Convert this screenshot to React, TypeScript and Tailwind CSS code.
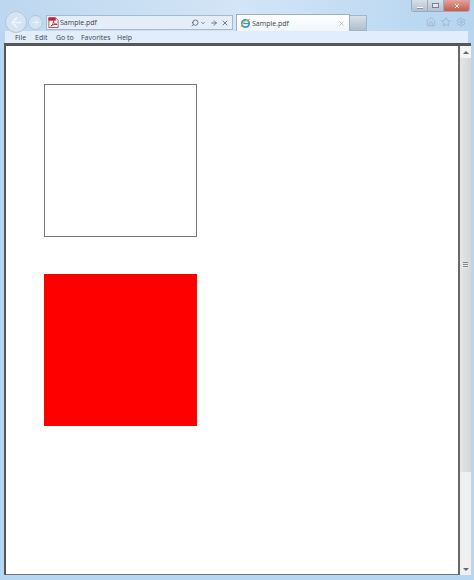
import { Home, Star, Settings, Search, ArrowRight, X, ArrowLeft, ChevronDown } from 'lucide-react';

const menus = [
  { label: 'File', width: 'w-[20px]' },
  { label: 'Edit', width: 'w-[21px]' },
  { label: 'Go to', width: 'w-[25px]' },
  { label: 'Favorites', width: 'w-[36px]' },
  { label: 'Help', width: 'w-[20px]' },
];

function PdfIcon() {
  return (
    <svg viewBox="0 0 12 12" className="w-[11px] h-[11px] shrink-0">
      <path d="M1 0.5h7l3 3v8H1z" fill="#fff" stroke="#8a2a2a" strokeWidth="0.8" />
      <path d="M0.5 1h8v3h-8z" fill="#c8202a" />
      <path d="M3 10c2-1 3-3 3-6 0 3 2 4 4 4-2 0-5 0-7 2z" fill="none" stroke="#c8202a" strokeWidth="1" />
    </svg>
  );
}

function IeIcon() {
  return (
    <svg viewBox="0 0 12 12" className="w-[11px] h-[11px] shrink-0">
      <circle cx="6" cy="6" r="4" fill="none" stroke="#2f9bd8" strokeWidth="2" />
      <path d="M2 6h8" stroke="#2f9bd8" strokeWidth="1.4" />
      <path d="M1 10c1-4 5-8 10-9" fill="none" stroke="#e8b93a" strokeWidth="1.2" />
    </svg>
  );
}

export default function App() {
  return (
    <div className="relative w-[474px] h-[580px] overflow-hidden flex flex-col bg-[#b9d6f0] font-['Open_Sans',sans-serif] text-[#3a4350]">
      {/* Title bar with nav, address and tabs */}
      <div className="h-[31px] shrink-0 flex items-start bg-gradient-to-r from-[#bcd7ef] via-[#d3e5f6] to-[#b4d4f0]">
        <div className="w-[46px] shrink-0" />
        <div className="mt-[15px] w-[187px] h-[15px] shrink-0 flex items-center pl-[1px] pr-[3px] border border-[#a8b9cb] bg-[#e4edf8]">
          <PdfIcon />
          <span className="ml-[1px] text-[7px] leading-none">Sample.pdf</span>
          <div className="ml-auto flex items-center gap-[1px] text-[#5a6573]">
            <Search className="w-[8px] h-[8px] -scale-x-100" strokeWidth={2.5} />
            <ChevronDown className="w-[6px] h-[6px]" strokeWidth={3} />
            <ArrowRight className="w-[8px] h-[8px] ml-[3px]" strokeWidth={2.5} />
            <X className="w-[8px] h-[8px] ml-[2px]" strokeWidth={2.5} />
          </div>
        </div>
        <div className="ml-[3px] mt-[14px] w-[114px] h-[17px] shrink-0 flex items-center pl-[3px] pr-[4px] border border-b-0 border-[#9cb0c4] bg-gradient-to-b from-white to-[#f1f6fb]">
          <IeIcon />
          <span className="ml-[1px] text-[7px] leading-none">Sample.pdf</span>
          <X className="ml-auto w-[7px] h-[7px] text-[#9aa4af]" strokeWidth={2} />
        </div>
        <div className="mt-[15px] w-[17px] h-[16px] shrink-0 border border-l-0 border-[#a3b5c7] bg-gradient-to-b from-[#d8e1ea] to-[#afbecd]" />
        <div className="ml-auto mt-[17px] mr-[8px] flex items-center gap-[5px] text-[#a2b1c0]">
          <Home className="w-[10px] h-[10px]" strokeWidth={2} />
          <Star className="w-[10px] h-[10px]" strokeWidth={2} />
          <Settings className="w-[10px] h-[10px]" strokeWidth={2} />
        </div>
      </div>

      {/* Back and forward buttons sit over the menu bar edge */}
      <div className="absolute top-[11px] left-[5px] flex items-center">
        <div className="w-[22px] h-[22px] rounded-full border border-[#b4c6d9] bg-[#d5e4f3] flex items-center justify-center">
          <ArrowLeft className="w-[15px] h-[15px] text-[#f1f6fb]" strokeWidth={2.5} />
        </div>
        <div className="w-[15px] h-[15px] ml-[1px] rounded-full border border-[#b4c6d9] bg-[#d3e3f2] flex items-center justify-center">
          <ArrowRight className="w-[9px] h-[9px] text-[#f1f6fb]" strokeWidth={2.5} />
        </div>
      </div>

      {/* Window controls */}
      <div className="absolute top-0 left-[411px] w-[59px] h-[12px] flex rounded-b-[3px] overflow-hidden border border-t-0 border-[#9aabbc]">
        <div className="w-[16px] bg-gradient-to-b from-[#d5e0ea] to-[#b3c1ce] flex items-end justify-center pb-[2px] border-r border-[#9aabbc]">
          <div className="w-[6px] h-[2px] bg-white border-b border-[#8492a0]" />
        </div>
        <div className="w-[16px] bg-gradient-to-b from-[#d5e0ea] to-[#b3c1ce] flex items-center justify-center border-r border-[#9aabbc]">
          <div className="w-[7px] h-[5px] border border-[#76838f] bg-[#dfe8f0]" />
        </div>
        <div className="flex-1 bg-gradient-to-b from-[#dfa49b] to-[#c8584c] flex items-center justify-center">
          <X className="w-[6px] h-[6px] text-white" strokeWidth={4} />
        </div>
      </div>

      {/* Menu bar */}
      <div className="h-[12px] shrink-0 ml-[5px] mr-[6px] flex items-center pl-[10px] bg-[#e3edf9] text-[7px] leading-none">
        {menus.map((menu) => (
          <span key={menu.label} className={menu.width}>
            {menu.label}
          </span>
        ))}
      </div>

      {/* Document area */}
      <div className="flex-1 min-h-0 ml-[4px] mr-[3px] mb-[5px] flex border-t-[3px] border-l-2 border-[#55585b] bg-white">
        <div className="flex-1 border-b border-[#777a7d] pl-[38px] pt-[38px] flex flex-col gap-[37px]">
          <div className="w-[153px] h-[153px] border border-[#777] bg-white" />
          <div className="w-[153px] h-[152px] bg-[#ff0000]" />
        </div>
        <div className="w-[13px] shrink-0 flex flex-col border-l-2 border-[#66696c] bg-[#f0f0f0]">
          <div className="h-[12px] shrink-0 flex items-center justify-center bg-[#f4f4f4]">
            <div className="w-0 h-0 border-x-[3px] border-x-transparent border-b-[3px] border-b-[#666]" />
          </div>
          <div className="h-[414px] shrink-0 flex items-center justify-center bg-gradient-to-r from-[#e6e6e6] to-[#d6d6d6]">
            <div className="w-[5px] h-[6px] bg-[repeating-linear-gradient(#888_0_1px,#e8e8e8_1px_2px)]" />
          </div>
          <div className="flex-1" />
          <div className="h-[12px] shrink-0 flex items-center justify-center">
            <div className="w-0 h-0 border-x-[3px] border-x-transparent border-t-[3px] border-t-[#666]" />
          </div>
        </div>
      </div>
    </div>
  );
}
